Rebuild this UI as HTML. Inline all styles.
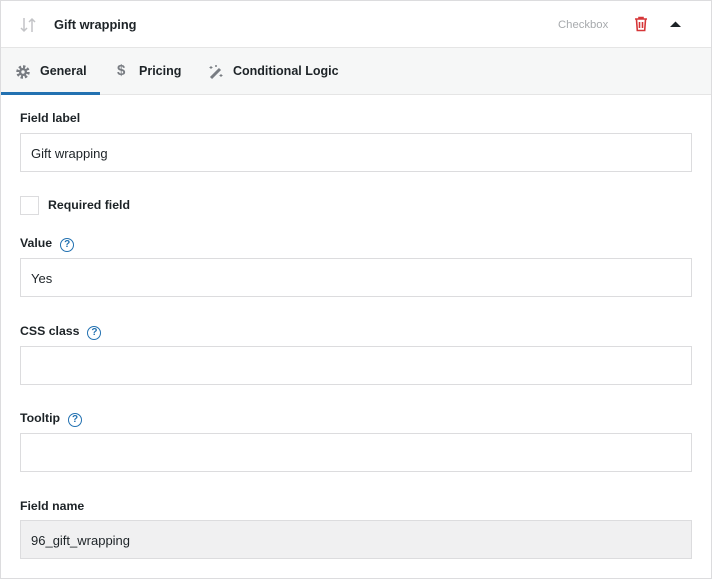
<!DOCTYPE html>
<html><head><style>
*{box-sizing:border-box;margin:0;padding:0}
body{width:712px;height:579px;background:#fff;font-family:"Liberation Sans",sans-serif;color:#1d2327;font-size:13px;overflow:hidden}
.wrap{position:absolute;left:0;top:0;width:712px;height:579px;border:1px solid #dcdcde}
.hdr{position:absolute;left:1px;top:1px;width:710px;height:47px;border-bottom:1px solid #e5e5e5}
.tabs{position:absolute;left:1px;top:48px;width:710px;height:47px;background:#f6f7f7;border-bottom:1px solid #e5e5e5}
.tab{position:absolute;top:16px;font-size:12.5px;font-weight:bold;color:#1d2327}
.lbl{position:absolute;left:20px;font-weight:bold;font-size:12.3px;color:#1d2327}
.inp{position:absolute;left:20px;width:672px;height:39px;border:1px solid #dcdcde;background:#fff;padding:12px 10px;font-size:13px}
.q{display:inline-block;width:14px;height:14px;border:1.5px solid #2271b1;border-radius:50%;color:#2271b1;font-size:10px;text-align:center;line-height:11px;margin-left:8px;vertical-align:0px;font-weight:bold}
</style></head><body>
<div class="wrap"></div>
<div class="hdr">
<svg style="position:absolute;left:19px;top:16px" width="16" height="16" viewBox="0 0 16 16" fill="none" stroke="#c3c4c7" stroke-width="1.5"><path d="M4 1v13M1 11l3 3 3-3M12 15V2M9 5l3-3 3 3"/></svg>
<div style="position:absolute;left:53px;top:16px;font-weight:bold;font-size:12.8px">Gift wrapping</div>
<div style="position:absolute;left:557px;top:18px;color:#a7aaad;font-size:11.3px">Checkbox</div>
<svg style="position:absolute;left:633px;top:15px" width="14" height="16" viewBox="0 0 14 16" fill="none" stroke="#d63638" stroke-width="1.6"><path d="M1 3h12M5 3V1.5h4V3M2.5 3.5l.8 11h7.4l.8-11M5.5 6v6M8.5 6v6"/></svg>
<svg style="position:absolute;left:669px;top:20px" width="11" height="7" viewBox="0 0 11 7"><path d="M0 6L5.5 0.5 11 6z" fill="#1d2327"/></svg>
</div>
<div class="tabs">
<div style="position:absolute;left:0;bottom:-1px;width:99px;height:3px;background:#2271b1"></div>
<svg style="position:absolute;left:15px;top:17px" width="14" height="14" viewBox="0 0 14 14"><circle cx="7" cy="7" r="5" fill="none" stroke="#787c82" stroke-width="3.5" stroke-dasharray="2.2 1.7"/><circle cx="7" cy="7" r="4" fill="#787c82"/><circle cx="7" cy="7" r="1.7" fill="#f6f7f7"/></svg>
<div class="tab" style="left:39px">General</div>
<div class="tab" style="left:116px;color:#787c82;font-size:15px;top:14px">$</div>
<div class="tab" style="left:138px">Pricing</div>
<svg style="position:absolute;left:207px;top:16px" width="16" height="16" viewBox="0 0 16 16"><path d="M3 14L12 5" stroke="#787c82" stroke-width="3"/><path d="M3 2v3M1.5 3.5h3M13 10v3M11.5 11.5h3M8 1v2M7 2h2" stroke="#787c82" stroke-width="1"/></svg>
<div class="tab" style="left:232px">Conditional Logic</div>
</div>
<div class="lbl" style="top:111px">Field label</div>
<div class="inp" style="top:133px">Gift wrapping</div>
<div style="position:absolute;left:20px;top:196px;width:19px;height:19px;border:1px solid #dcdcde"></div>
<div class="lbl" style="left:48px;top:198px">Required field</div>
<div class="lbl" style="top:236px">Value<span class="q">?</span></div>
<div class="inp" style="top:258px">Yes</div>
<div class="lbl" style="top:324px">CSS class<span class="q">?</span></div>
<div class="inp" style="top:346px"></div>
<div class="lbl" style="top:411px">Tooltip<span class="q">?</span></div>
<div class="inp" style="top:433px"></div>
<div class="lbl" style="top:499px">Field name</div>
<div class="inp" style="top:520px;background:#f0f0f1">96_gift_wrapping</div>
</body></html>
